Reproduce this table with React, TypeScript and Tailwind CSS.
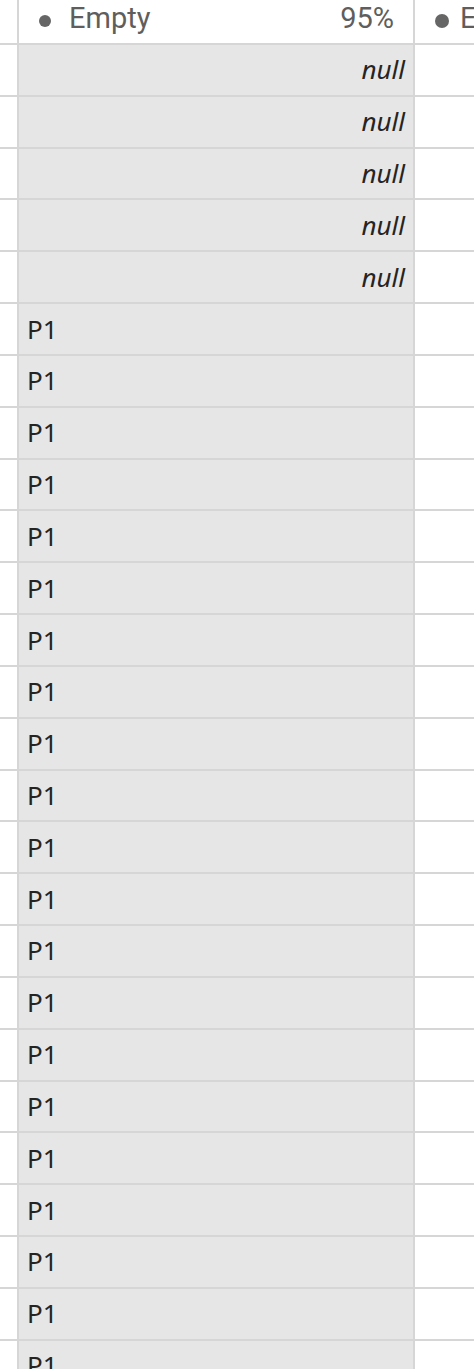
import React from "react";

const rows: { v: string; isNull: boolean }[] = [
  ...Array.from({ length: 5 }, () => ({ v: "null", isNull: true })),
  ...Array.from({ length: 21 }, () => ({ v: "P1", isNull: false })),
];

export default function App() {
  return (
    <div className="w-[474px] h-[1369px] overflow-hidden bg-white">
      <div className="flex h-[45px] border-b-2 border-[#d6d6d6]">
        <div className="w-[17px] shrink-0" />
        <div className="w-[398px] shrink-0 border-x-2 border-[#d6d6d6] flex items-center pb-[5px] pl-[20px] pr-[19px] font-['Roboto',sans-serif] text-[29px] text-[#605e5c]">
          <span className="w-[12px] h-[12px] rounded-full bg-[#666666] mr-[18px] mt-[3px] shrink-0" />
          <span className="flex-1">Empty</span>
          <span>95%</span>
        </div>
        <div className="flex-1 flex items-center pb-[5px] pl-[20px] overflow-hidden font-['Roboto',sans-serif] text-[29px] text-[#605e5c] whitespace-nowrap">
          <span className="w-[14px] h-[14px] rounded-full bg-[#666666] mr-[11px] mt-[3px] shrink-0" />
          <span>Empty</span>
        </div>
      </div>
      {rows.map((r, i) => (
        <div key={i} className="flex h-[51.84px] border-b-2 border-[#d6d6d6]">
          <div className="w-[17px] shrink-0" />
          <div
            className={
              "w-[398px] shrink-0 border-x-2 border-[#d6d6d6] bg-[#e6e6e6] flex items-center font-['Noto_Sans',sans-serif] text-[26px] text-[#252423] " +
              (r.isNull ? "justify-end pr-[8px] italic" : "pl-[8px]")
            }
          >
            {r.v}
          </div>
          <div className="flex-1" />
        </div>
      ))}
    </div>
  );
}
